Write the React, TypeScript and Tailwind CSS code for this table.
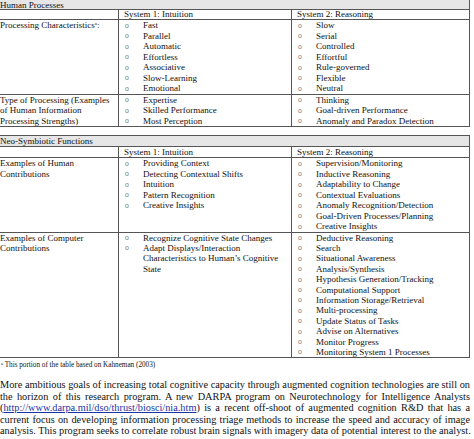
import React from "react";

const Bul = ({ children }: { children: React.ReactNode }) => (
  <div className="flex items-start">
    <span className="relative top-[0.5px] w-[24px] shrink-0 pl-[6px] text-[7px] leading-[inherit] text-[#777] font-['Liberation_Sans']">o</span>
    <span>{children}</span>
  </div>
);

const Row = ({ a, b, c, cls = "" }: { a: React.ReactNode; b: React.ReactNode; c: React.ReactNode; cls?: string }) => (
  <div className={"grid grid-cols-[120px_173px_1fr] border-b border-[#555] " + cls}>
    <div className="border-r border-[#555] pl-[1px]">{a}</div>
    <div className="border-r border-[#555]">{b}</div>
    <div>{c}</div>
  </div>
);

const SysRow = ({ h }: { h: string }) => (
  <Row
    cls={h}
    a={<span />}
    b={<div className="pl-[5px]">System 1: Intuition</div>}
    c={<div className="pl-[5px]">System 2: Reasoning</div>}
  />
);

const list = (items: React.ReactNode[]) => (
  <div>
    {items.map((t, i) => (
      <Bul key={i}>{t}</Bul>
    ))}
  </div>
);

export default function App() {
  const lines: React.ReactNode[] = [
    "More ambitious goals of increasing total cognitive capacity through augmented cognition technologies are still on",
    "the horizon of this research program.  A new DARPA program on Neurotechnology for Intelligence Analysts",
    <>
      (<span className="text-[#1a33a6] underline">http://www.darpa.mil/dso/thrust/biosci/nia.htm</span>) is a recent off-shoot of augmented cognition R&amp;D that has a
    </>,
    "current focus on developing information processing triage methods to increase the speed and accuracy of image",
    "analysis. This program seeks to correlate robust brain signals with imagery data of potential interest to the analyst.",
  ];
  return (
    <div className="w-[474px] h-[439px] overflow-hidden bg-white text-[#111] font-['Liberation_Serif',serif]">
      <div className="text-[9px] leading-[10.5px]">
        {/* Table 1 */}
        <div className="ml-[-2px] mt-[-1px] w-[472px] border border-[#555]">
          <div className="h-[10px] leading-[10px] bg-[#e6e6e6] border-b border-[#555] pl-[1px]">Human Processes</div>
          <SysRow h="h-[10px] leading-[9px]" />
          <Row
            a={
              <div>
                Processing Characteristics<span className="relative top-[-3px] text-[5px] leading-none">a</span>:
              </div>
            }
            b={list(["Fast", "Parallel", "Automatic", "Effortless", "Associative", "Slow-Learning", "Emotional"])}
            c={list(["Slow", "Serial", "Controlled", "Effortful", "Rule-governed", "Flexible", "Neutral"])}
          />
          <Row
            cls="border-b-0"
            a={
              <div>
                Type of Processing (Examples
                <br />
                of Human Information
                <br />
                Processing Strengths)
              </div>
            }
            b={list(["Expertise", "Skilled Performance", "Most Perception"])}
            c={list(["Thinking", "Goal-driven Performance", "Anomaly and Paradox Detection"])}
          />
        </div>

        {/* Table 2 */}
        <div className="ml-[-2px] mt-[8px] w-[472px] border border-[#555]">
          <div className="h-[11px] leading-[11px] bg-[#e6e6e6] border-b border-[#555] pl-[1px]">Neo-Symbiotic Functions</div>
          <SysRow h="h-[11px] leading-[10px]" />
          <Row
            a={
              <div>
                Examples of Human
                <br />
                Contributions
              </div>
            }
            b={list(["Providing Context", "Detecting Contextual Shifts", "Intuition", "Pattern Recognition", "Creative Insights"])}
            c={list([
              "Supervision/Monitoring",
              "Inductive Reasoning",
              "Adaptability to Change",
              "Contextual Evaluations",
              "Anomaly Recognition/Detection",
              "Goal-Driven Processes/Planning",
              "Creative Insights",
            ])}
          />
          <Row
            cls="border-b-0 leading-[10.4px]"
            a={
              <div>
                Examples of Computer
                <br />
                Contributions
              </div>
            }
            b={list([
              "Recognize Cognitive State Changes",
              <>
                Adapt Displays/Interaction
                <br />
                Characteristics to Human’s Cognitive
                <br />
                State
              </>,
            ])}
            c={list([
              "Deductive Reasoning",
              "Search",
              "Situational Awareness",
              "Analysis/Synthesis",
              "Hypothesis Generation/Tracking",
              "Computational Support",
              "Information Storage/Retrieval",
              "Multi-processing",
              "Update Status of Tasks",
              "Advise on Alternatives",
              "Monitor Progress",
              "Monitoring System 1 Processes",
            ])}
          />
        </div>
      </div>

      {/* Footnote */}
      <div className="mt-[3px] text-[7.2px] leading-[9px] pl-[1px]">
        <span className="relative top-[-2px] text-[4.5px]">a</span> This portion of the table based on Kahneman (2003)
      </div>

      {/* Paragraph */}
      <div className="mt-[9px] w-[470px] text-[10.3px] leading-[11.5px] text-[#111]">
        {lines.map((l, i) => (
          <div key={i} className="text-justify [text-align-last:justify] whitespace-nowrap">
            {l}
          </div>
        ))}
      </div>
    </div>
  );
}
